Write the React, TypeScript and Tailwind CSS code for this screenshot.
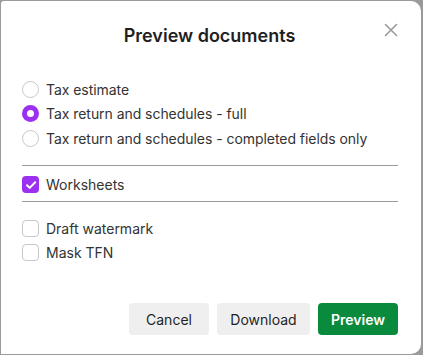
import React, { useState } from "react"

const FONT = { fontFamily: "Inter, 'Noto Sans', sans-serif" }

const RADIO_OPTIONS = [
  "Tax estimate",
  "Tax return and schedules - full",
  "Tax return and schedules - completed fields only",
]

function Radio({ checked }: { checked: boolean }) {
  return checked ? (
    <span className="flex h-[17px] w-[17px] shrink-0 items-center justify-center rounded-full bg-[#9b30f0]">
      <span className="h-[7px] w-[7px] rounded-full bg-white" />
    </span>
  ) : (
    <span className="h-[17px] w-[17px] shrink-0 rounded-full border border-[#c8c8c8] bg-white" />
  )
}

function Checkbox({ checked }: { checked: boolean }) {
  return checked ? (
    <span className="flex h-[17px] w-[17px] shrink-0 items-center justify-center rounded-[4px] bg-[#9b30f0]">
      <svg width="12" height="12" viewBox="0 0 12 12" fill="none">
        <path d="M2 6.2l2.7 2.7L10.2 3.3" stroke="white" strokeWidth="2" strokeLinecap="round" strokeLinejoin="round" />
      </svg>
    </span>
  ) : (
    <span className="h-[17px] w-[17px] shrink-0 rounded-[4px] border border-[#c8c8c8] bg-white" />
  )
}

export default function App() {
  const [format, setFormat] = useState(1)
  const [worksheets, setWorksheets] = useState(true)
  const [draft, setDraft] = useState(false)
  const [mask, setMask] = useState(false)

  return (
    <div className="h-[355px] w-[423px] bg-[#9a9a9a] pl-px pt-px" style={FONT}>
      <div className="flex h-[353px] w-[420px] flex-col rounded-tl-[3px] rounded-r-[10px] bg-white pl-[21px] pr-[23px] text-[#333]">
        {/* Header */}
        <div className="relative mt-[21px] flex h-[26px] items-center justify-center">
          <h2 className="-ml-[1px] text-[18px] font-semibold text-[#1f1f1f]">Preview documents</h2>
          <button className="absolute right-[0px] top-[1px] text-[#9a9a9a]" aria-label="Close">
            <svg width="14" height="14" viewBox="0 0 14 14" fill="none">
              <path d="M1.5 1.5l11 11M12.5 1.5l-11 11" stroke="currentColor" strokeWidth="1.6" strokeLinecap="round" />
            </svg>
          </button>
        </div>

        {/* Format */}
        <div className="mt-[29px] flex flex-col">
          {RADIO_OPTIONS.map((label, i) => (
            <label
              key={label}
              className="flex h-[24.5px] cursor-pointer items-center gap-[7px] text-[14px] tracking-[-0.05px]"
              onClick={() => setFormat(i)}
            >
              <Radio checked={format === i} />
              <span>{label}</span>
            </label>
          ))}
        </div>

        <div className="mt-[14px] h-px bg-[#9a9a9a]" />

        <label
          className="mt-[7px] flex h-[24.5px] cursor-pointer items-center gap-[7px] text-[14px]"
          onClick={() => setWorksheets(!worksheets)}
        >
          <Checkbox checked={worksheets} />
          <span>Worksheets</span>
        </label>

        <div className="mt-[4px] h-px bg-[#9a9a9a]" />

        <div className="mt-[14px] flex flex-col">
          <label className="flex h-[24.5px] cursor-pointer items-center gap-[7px] text-[14px]" onClick={() => setDraft(!draft)}>
            <Checkbox checked={draft} />
            <span>Draft watermark</span>
          </label>
          <label className="flex h-[24.5px] cursor-pointer items-center gap-[7px] text-[14px]" onClick={() => setMask(!mask)}>
            <Checkbox checked={mask} />
            <span>Mask TFN</span>
          </label>
        </div>

        {/* Footer */}
        <div className="mt-auto mb-[19px] flex justify-end gap-2">
          <button className="h-8 w-20 rounded-[4px] bg-[#efefef] text-[14px] text-[#1f1f1f]">Cancel</button>
          <button className="h-8 w-[93px] rounded-[4px] bg-[#efefef] text-[14px] text-[#1f1f1f]">Download</button>
          <button className="h-8 w-20 rounded-[4px] bg-[#0a8a3c] text-[14px] font-semibold text-white">Preview</button>
        </div>
      </div>
    </div>
  )
}
